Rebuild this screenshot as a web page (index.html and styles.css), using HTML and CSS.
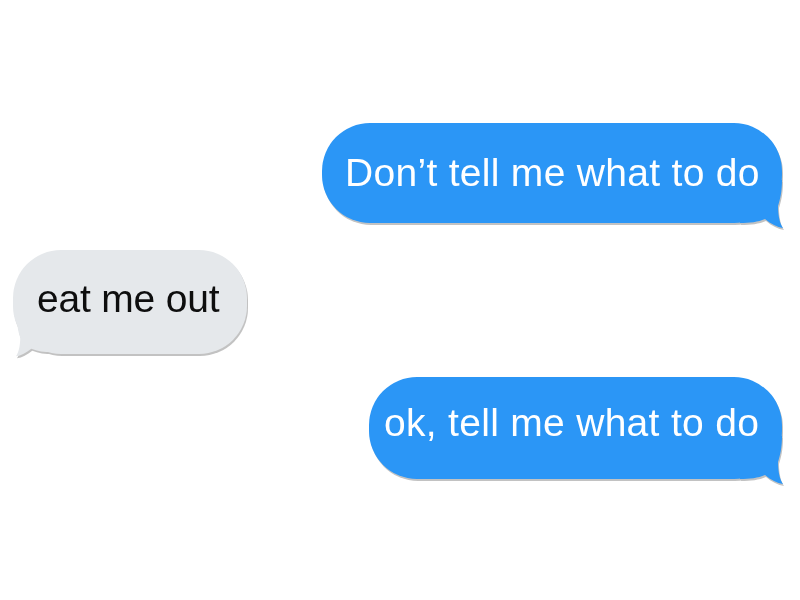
FILE: index.html
```html
<!DOCTYPE html>
<html lang="en">
<head>
<meta charset="utf-8">
<title>Messages</title>
<link rel="stylesheet" href="styles.css">
</head>
<body>
<main class="thread">
  <div class="row row-out first">
    <div class="bubble bubble-blue b1">
      <span class="text">Don’t tell me what to do</span>
      <svg class="tail tail-right" width="46" height="50" viewBox="0 0 46 50" aria-hidden="true"><path d="M0 0 L42 0 C42 12 40 20 38 26 C38 36 40 44 43 48 C37 47 31 44 25 39 C18 42 10 43 0 43 Z"/></svg>
    </div>
  </div>
  <div class="row row-in second">
    <div class="bubble bubble-grey b2">
      <span class="text">eat me out</span>
      <svg class="tail tail-left" width="46" height="50" viewBox="0 0 46 50" aria-hidden="true"><path d="M0 0 L42 0 C42 12 40 20 38 26 C38 36 40 44 43 48 C37 47 31 44 25 39 C18 42 10 43 0 43 Z"/></svg>
    </div>
  </div>
  <div class="row row-out third">
    <div class="bubble bubble-blue b3">
      <span class="text">ok, tell me what to do</span>
      <svg class="tail tail-right" width="46" height="50" viewBox="0 0 46 50" aria-hidden="true"><path d="M0 0 L42 0 C42 12 40 20 38 26 C38 36 40 44 43 48 C37 47 31 44 25 39 C18 42 10 43 0 43 Z"/></svg>
    </div>
  </div>
</main>
</body>
</html>
```

FILE: styles.css
```css
html, body {
  margin: 0;
  padding: 0;
  background: #ffffff;
}

body {
  width: 800px;
  height: 600px;
  overflow: hidden;
  font-family: "Liberation Sans", Arial, sans-serif;
}

.thread {
  display: flex;
  flex-direction: column;
  padding-top: 123px;
}

.row {
  display: flex;
}

.row-out {
  justify-content: flex-end;
  padding-right: 18px;
}

.row-in {
  justify-content: flex-start;
  padding-left: 13px;
}

.second {
  margin-top: 27px;
}

.third {
  margin-top: 23px;
}

.bubble {
  position: relative;
  box-sizing: border-box;
  display: flex;
  align-items: center;
  border-radius: 48px;
  font-size: 39px;
  letter-spacing: 0.3px;
  white-space: nowrap;
  filter: drop-shadow(1px 2px 0.6px rgba(0, 0, 0, 0.24));
}

.bubble-blue {
  background: #2b96f6;
  color: #ffffff;
}

.bubble-blue .tail path {
  fill: #2b96f6;
}

.bubble-grey {
  background: #e5e8eb;
  color: #0e0e0e;
}

.bubble-grey .tail path {
  fill: #e5e8eb;
}

.text {
  position: relative;
  z-index: 1;
}

.tail {
  position: absolute;
  z-index: 0;
}

.tail-right {
  right: -4px;
  bottom: -7px;
}

.tail-left {
  left: -3px;
  bottom: -4px;
  transform: scaleX(-1) scale(0.85);
  transform-origin: bottom center;
}

.b1 {
  width: 460px;
  height: 100px;
  padding-left: 23px;
}

.b2 {
  width: 234px;
  height: 104px;
  padding-left: 24px;
  padding-bottom: 7px;
  letter-spacing: -0.2px;
}

.b3 {
  width: 413px;
  height: 102px;
  padding-left: 15px;
  padding-bottom: 11px;
}
```
